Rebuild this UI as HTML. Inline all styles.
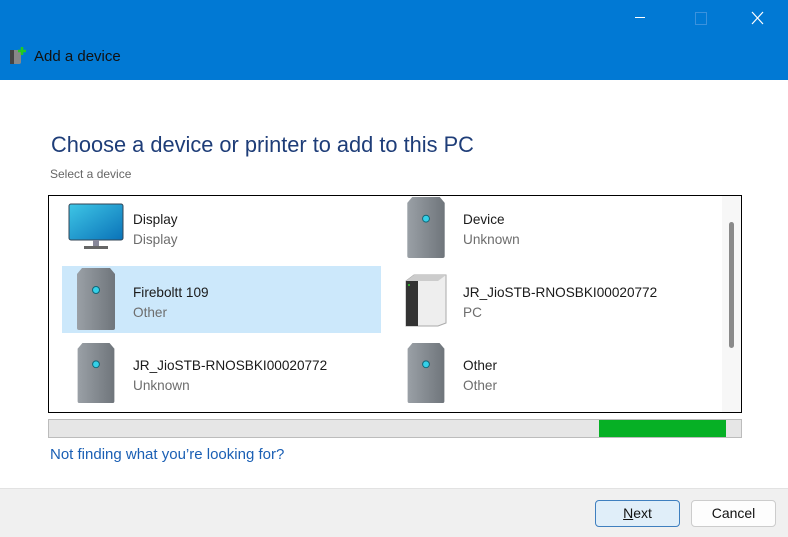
<!DOCTYPE html>
<html><head><style>
body{margin:0;width:788px;height:536px;overflow:hidden;font-family:"Liberation Sans",sans-serif;background:#fff;position:relative}
.a{position:absolute}
.t{font-size:13.6px;color:#1a1a1a}
.s{font-size:13.6px;color:#6d6d6d}
</style></head><body>
<div class="a" style="left:0;top:0;width:788px;height:80px;background:#0179d4"></div>
<div class="a" style="left:635px;top:17px;width:10px;height:1px;background:#fff"></div>
<div class="a" style="left:695px;top:12px;width:10px;height:11px;border:1px solid #3b92dd"></div>
<svg class="a" style="left:750px;top:10px" width="16" height="16"><path d="M2 2l11 12M13 2L2 14" stroke="#fff" stroke-width="1.2"/></svg>
<svg class="a" style="left:8px;top:46px" width="20" height="20"><rect x="2" y="4" width="11" height="14" rx="2" fill="#888"/><rect x="2" y="4" width="4" height="14" fill="#444"/><path d="M14 1v8M10 5h8" stroke="#2c2" stroke-width="2.5"/></svg>
<div class="a" style="left:34px;top:48px;font-size:15px;color:#111">Add a device</div>
<div class="a" style="left:51px;top:132px;font-size:21.8px;color:#1e3d78">Choose a device or printer to add to this PC</div>
<div class="a" style="left:50px;top:167px;font-size:12px;color:#666">Select a device</div>
<div class="a" style="left:48px;top:195px;width:692px;height:216px;border:1px solid #000"></div>
<div class="a" style="left:722px;top:196px;width:19px;height:216px;background:#f7f7f7"></div>
<div class="a" style="left:729px;top:222px;width:5px;height:126px;background:#8a8a8a;border-radius:3px"></div>
<div class="a" style="left:62px;top:266px;width:319px;height:67px;background:#cce8fb"></div>
<svg class="a" style="left:68px;top:203px" width="56" height="48"><defs><linearGradient id="g" x1="0" y1="0" x2="1" y2="1"><stop offset="0" stop-color="#3ec6e6"/><stop offset="1" stop-color="#0a72b8"/></linearGradient></defs><rect x="1" y="1" width="54" height="36" rx="2" fill="url(#g)" stroke="#345"/><rect x="25" y="37" width="6" height="6" fill="#889"/><rect x="16" y="43" width="24" height="3" fill="#666"/></svg>
<svg width="0" height="0"><defs><linearGradient id="tw" x1="0" x2="1"><stop offset="0" stop-color="#9aa0a6"/><stop offset="1" stop-color="#6f757b"/></linearGradient><symbol id="T" viewBox="0 0 38 62"><path d="M5 0h28l5 6v54a2 2 0 0 1-2 2H2a2 2 0 0 1-2-2V6z" fill="url(#tw)"/><circle cx="19" cy="22" r="3.5" fill="#35d0e8" stroke="#167" stroke-width="1"/></symbol></defs></svg>
<svg class="a" style="left:407px;top:197px" width="38" height="61"><use href="#T"/></svg>
<svg class="a" style="left:77px;top:268px" width="38" height="62"><use href="#T"/></svg>
<svg class="a" style="left:77px;top:343px" width="38" height="60"><use href="#T"/></svg>
<svg class="a" style="left:407px;top:343px" width="38" height="60"><use href="#T"/></svg>
<svg class="a" style="left:404px;top:273px" width="44" height="54"><path d="M10 2h32v48l-8 3H2V8z" fill="#eee" stroke="#aaa"/><rect x="2" y="8" width="12" height="45" fill="#333"/><path d="M2 8l8-6h32l-8 6z" fill="#ccc"/><circle cx="5" cy="12" r="1" fill="#3c3"/></svg>
<div class="a t" style="left:133px;top:212px">Display</div><div class="a s" style="left:133px;top:232px">Display</div>
<div class="a t" style="left:463px;top:212px">Device</div><div class="a s" style="left:463px;top:232px">Unknown</div>
<div class="a t" style="left:133px;top:285px">Fireboltt 109</div><div class="a s" style="left:133px;top:305px">Other</div>
<div class="a t" style="left:463px;top:285px">JR_JioSTB-RNOSBKI00020772</div><div class="a s" style="left:463px;top:305px">PC</div>
<div class="a t" style="left:133px;top:358px">JR_JioSTB-RNOSBKI00020772</div><div class="a s" style="left:133px;top:378px">Unknown</div>
<div class="a t" style="left:463px;top:358px">Other</div><div class="a s" style="left:463px;top:378px">Other</div>
<div class="a" style="left:48px;top:419px;width:692px;height:17px;background:#e6e6e6;border:1px solid #bcbcbc"></div>
<div class="a" style="left:599px;top:420px;width:127px;height:17px;background:#06b025"></div>
<div class="a" style="left:50px;top:446px;font-size:15px;color:#1a5fb4">Not finding what you’re looking for?</div>
<div class="a" style="left:0;top:488px;width:788px;height:48px;background:#f0f0f0;border-top:1px solid #e2e2e2"></div>
<div class="a" style="left:595px;top:500px;width:83px;height:25px;border:1px solid #3f7fbf;border-radius:4px;background:#e0eef9;font-size:14px;text-align:center;line-height:25px;color:#111"><u>N</u>ext</div>
<div class="a" style="left:691px;top:500px;width:83px;height:25px;border:1px solid #ccc;border-radius:4px;background:#fdfdfd;font-size:14px;text-align:center;line-height:25px;color:#111">Cancel</div>
</body></html>
